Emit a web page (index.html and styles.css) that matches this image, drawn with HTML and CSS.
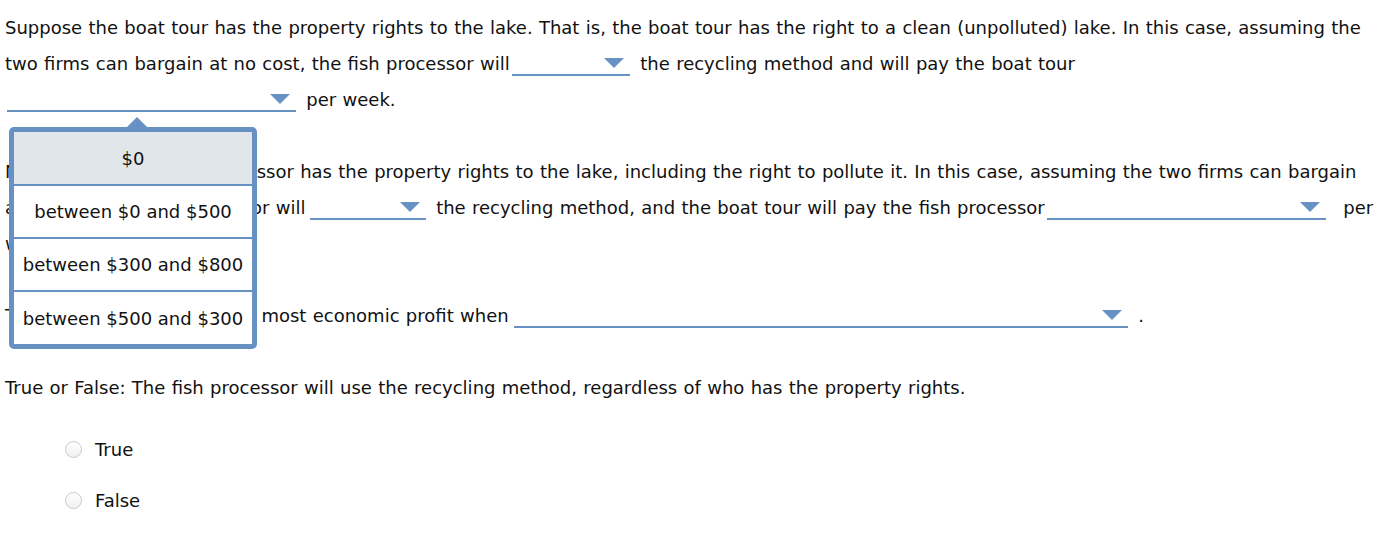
FILE: index.html
```html
<!DOCTYPE html>
<html>
<head>
<meta charset="utf-8">
<link rel="stylesheet" href="styles.css">
</head>
<body>
<div class="page">
  <p class="para">Suppose the boat tour has the property rights to the lake. That is, the boat tour has the right to a clean (unpolluted) lake. In this case, assuming the<br>two firms can bargain at no cost, the fish processor will <span class="dd d1"><i class="arrow"></i></span> the recycling method and will pay the boat tour<br><span class="dd d2"><i class="arrow"></i></span> per week.</p>

  <p class="para">Now suppose the fish processor has the property rights to the lake, including the right to pollute it. In this case, assuming the two firms can bargain<br>at no cost, the fish processor will <span class="dd d3"><i class="arrow"></i></span> the recycling method, and the boat tour will pay the fish processor <span class="dd d4"><i class="arrow"></i></span> per<br>week.</p>

  <p class="para"><span class="lead">The two firms will earn the</span> most economic profit when <span class="dd d5"><i class="arrow"></i></span> .</p>

  <p class="para">True or False: The fish processor will use the recycling method, regardless of who has the property rights.</p>

  <ul class="radios">
    <li class="radio"><span class="circle"></span><span class="label">True</span></li>
    <li class="radio"><span class="circle"></span><span class="label">False</span></li>
  </ul>

  <div class="popup">
    <div class="pointer"></div>
    <ul class="options">
      <li class="option selected">$0</li>
      <li class="option">between $0 and $500</li>
      <li class="option">between $300 and $800</li>
      <li class="option">between $500 and $300</li>
    </ul>
  </div>
</div>
</body>
</html>
```

FILE: styles.css
```css
html, body {
  margin: 0;
  padding: 0;
  background: #ffffff;
}

.page {
  position: relative;
  padding: 10px 0 0 5px;
  font-family: "DejaVu Sans", Verdana, sans-serif;
  font-size: 18px;
  word-spacing: 0.6px;
  color: #111111;
}

.para {
  margin: 0 0 36px 0;
  line-height: 36px;
  white-space: nowrap;
}

.lead {
  word-spacing: 2px;
}

.dd {
  display: inline-block;
  box-sizing: border-box;
  height: 18px;
  padding-right: 6px;
  border-bottom: 2px solid #6691c2;
  vertical-align: -6px;
  margin-right: 4px;
}

.d1 { width: 118px; margin-left: -4px; }
.d2 { width: 289px; margin-left: 2px; }
.d3 { width: 116px; margin-left: -2px; }
.d4 { width: 279px; margin-left: -4px; margin-right: 11px; }
.d5 { width: 614px; margin-left: -1px; }

.arrow {
  float: right;
  width: 0;
  height: 0;
  border-left: 10px solid transparent;
  border-right: 10px solid transparent;
  border-top: 10px solid #6691c2;
}

.radios {
  list-style: none;
  margin: -6px 0 0 0;
  padding: 0 0 0 60px;
  display: flex;
  flex-direction: column;
  gap: 25px;
}

.radio {
  display: flex;
  align-items: center;
  gap: 13px;
  height: 26px;
}

.circle {
  width: 17px;
  height: 17px;
  box-sizing: border-box;
  border: 1px solid #c8c8c8;
  border-radius: 50%;
  background: linear-gradient(#ffffff, #f1f1f1);
}

.label {
  font-size: 18px;
}

.popup {
  position: absolute;
  left: 9px;
  top: 127px;
  width: 248px;
  box-sizing: border-box;
  border: 5px solid #6691c2;
  border-radius: 5px;
  background: #ffffff;
}

.pointer {
  position: absolute;
  left: 112px;
  top: -15px;
  width: 0;
  height: 0;
  border-left: 11px solid transparent;
  border-right: 11px solid transparent;
  border-bottom: 11px solid #6691c2;
}

.options {
  list-style: none;
  margin: 0;
  padding: 0;
}

.option {
  height: 51px;
  display: flex;
  align-items: center;
  justify-content: center;
  font-size: 18px;
  word-spacing: 0;
  color: #111111;
  border-top: 2px solid #6691c2;
}

.option:first-child {
  border-top: none;
  height: 52px;
}

.option:last-child {
  height: 52px;
}

.option.selected {
  background: #e0e6e9;
}
```
